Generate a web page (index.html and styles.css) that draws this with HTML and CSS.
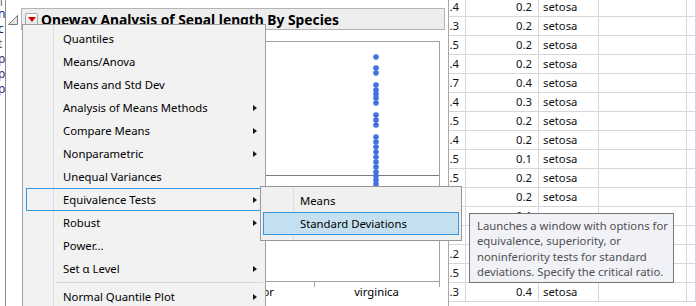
FILE: index.html
```html
<!DOCTYPE html>
<html lang="en">
<head>
  <meta charset="UTF-8" />
  <title>Oneway Analysis of Sepal length By Species</title>
  <link rel="stylesheet" href="styles.css">
</head>
<body>

  <div class="app">
    <div class="edge">
      <div class="e0">|</div>
      <div class="e1">n</div>
      <div class="e2">c</div>
      <div class="e3">t</div>
      <div class="e4">p</div>
      <div class="e4">p</div>
      <div class="e4">p</div>
    </div>

    <div class="report">
      <div class="outline">
        <svg class="disclose" width="10" height="10" viewBox="0 0 10 10">
          <polygon points="9.5,0.5 9.5,9.5 0.5,9.5" fill="#e4e4e4" stroke="#7a7a7a" stroke-width="1"/>
        </svg>
        <div class="outline-box">
          <span class="hot"><span class="hot-tri"></span></span>
          <span class="title">Oneway Analysis of Sepal length By Species</span>
        </div>
      </div>

      <svg class="plot" width="437" height="265">
        <rect x="40.5" y="0.5" width="393" height="240" fill="#fff" stroke="#a0a0a0"/>
        <line x1="40" y1="134.5" x2="433" y2="134.5" stroke="#7a7a7a"/>
        <line x1="308.5" y1="240" x2="308.5" y2="246" stroke="#a0a0a0"/>
        <line x1="433.5" y1="240" x2="433.5" y2="246" stroke="#a0a0a0"/>
        <g fill="#4372e0">
          <circle cx="370" cy="16" r="2.8"/>
          <circle cx="370" cy="27" r="2.8"/>
          <circle cx="370" cy="32" r="2.8"/>
          <circle cx="370" cy="44" r="2.8"/>
          <circle cx="370" cy="49" r="2.8"/>
          <circle cx="370" cy="53" r="2.8"/>
          <circle cx="370" cy="57" r="2.8"/>
          <circle cx="370" cy="62" r="2.8"/>
          <circle cx="370" cy="74" r="2.8"/>
          <circle cx="370" cy="79" r="2.8"/>
          <circle cx="370" cy="84" r="2.8"/>
          <circle cx="370" cy="96" r="2.8"/>
          <circle cx="370" cy="101" r="2.8"/>
          <circle cx="370" cy="106" r="2.8"/>
          <circle cx="370" cy="111" r="2.8"/>
          <circle cx="370" cy="116" r="2.8"/>
          <circle cx="370" cy="121" r="2.8"/>
          <circle cx="370" cy="126" r="2.8"/>
          <circle cx="370" cy="131" r="2.8"/>
          <circle cx="370" cy="135" r="2.8"/>
          <circle cx="370" cy="139" r="2.8"/>
          <circle cx="370" cy="143" r="2.8"/>
          <circle cx="370" cy="148" r="2.8"/>
          <circle cx="370" cy="153" r="2.8"/>
        </g>
        <text class="axis-label" x="242" y="255" text-anchor="middle">versicolor</text>
        <text class="axis-label" x="370.5" y="255" text-anchor="middle">virginica</text>
      </svg>
    </div>

    <div class="table">
      <div class="row"><div class="cell num">.4</div><div class="cell num">0.2</div><div class="cell">setosa</div><div class="cell"></div><div class="cell"></div></div>
      <div class="row"><div class="cell num">.3</div><div class="cell num">0.2</div><div class="cell">setosa</div><div class="cell"></div><div class="cell"></div></div>
      <div class="row"><div class="cell num">.5</div><div class="cell num">0.2</div><div class="cell">setosa</div><div class="cell"></div><div class="cell"></div></div>
      <div class="row"><div class="cell num">.4</div><div class="cell num">0.2</div><div class="cell">setosa</div><div class="cell"></div><div class="cell"></div></div>
      <div class="row"><div class="cell num">.7</div><div class="cell num">0.4</div><div class="cell">setosa</div><div class="cell"></div><div class="cell"></div></div>
      <div class="row"><div class="cell num">.4</div><div class="cell num">0.3</div><div class="cell">setosa</div><div class="cell"></div><div class="cell"></div></div>
      <div class="row"><div class="cell num">.5</div><div class="cell num">0.2</div><div class="cell">setosa</div><div class="cell"></div><div class="cell"></div></div>
      <div class="row"><div class="cell num">.4</div><div class="cell num">0.2</div><div class="cell">setosa</div><div class="cell"></div><div class="cell"></div></div>
      <div class="row"><div class="cell num">.5</div><div class="cell num">0.1</div><div class="cell">setosa</div><div class="cell"></div><div class="cell"></div></div>
      <div class="row"><div class="cell num">.5</div><div class="cell num">0.2</div><div class="cell">setosa</div><div class="cell"></div><div class="cell"></div></div>
      <div class="row"><div class="cell num">.5</div><div class="cell num">0.2</div><div class="cell">setosa</div><div class="cell"></div><div class="cell"></div></div>
      <div class="row"><div class="cell num">.6</div><div class="cell num">0.1</div><div class="cell"></div><div class="cell"></div><div class="cell"></div></div>
      <div class="row"><div class="cell num">.4</div><div class="cell num"></div><div class="cell"></div><div class="cell"></div><div class="cell"></div></div>
      <div class="row"><div class="cell num">.2</div><div class="cell num"></div><div class="cell"></div><div class="cell"></div><div class="cell"></div></div>
      <div class="row"><div class="cell num">.5</div><div class="cell num"></div><div class="cell"></div><div class="cell"></div><div class="cell"></div></div>
      <div class="row"><div class="cell num">.3</div><div class="cell num">0.4</div><div class="cell">setosa</div><div class="cell"></div><div class="cell"></div></div>
    </div>
  </div>

  <div class="menu">
    <div class="item">Quantiles</div>
    <div class="item">Means/Anova</div>
    <div class="item">Means and Std Dev</div>
    <div class="item sub">Analysis of Means Methods<span class="arrow"></span></div>
    <div class="item sub">Compare Means<span class="arrow"></span></div>
    <div class="item sub">Nonparametric<span class="arrow"></span></div>
    <div class="item">Unequal Variances</div>
    <div class="item sub open">Equivalence Tests<span class="arrow"></span></div>
    <div class="item sub">Robust<span class="arrow"></span></div>
    <div class="item">Power...</div>
    <div class="item sub">Set α Level<span class="arrow"></span></div>
    <div class="sep"></div>
    <div class="item sub">Normal Quantile Plot<span class="arrow"></span></div>
  </div>

  <div class="submenu">
    <div class="item">Means</div>
    <div class="item hover">Standard Deviations</div>
  </div>

  <div class="tip">
    Launches a window with options for<br>
    equivalence, superiority, or<br>
    noninferiority tests for standard<br>
    deviations. Specify the critical ratio.
  </div>

</body>
</html>
```

FILE: styles.css
```css
body {
  margin: 0;
  width: 696px;
  height: 306px;
  overflow: hidden;
  position: relative;
  font-family: 'Noto Sans', sans-serif;
  font-size: 11.3px;
  color: #000;
  background-color: #fff;
}

.app {
  display: flex;
  height: 306px;
  overflow: hidden;
}

/* cut-off column list on the far left */
.edge {
  width: 5px;
  flex-shrink: 0;
  overflow: hidden;
  border-right: 1px solid #8c8c8c;
  font-size: 12px;
  line-height: 15px;
  margin-top: -9px;
  white-space: nowrap;
}

.edge div {
  text-indent: -2px;
}

.e0 { color: #555; }
.e1 { color: #1d2a7a; }
.e2 { color: #1d2a5a; }
.e3 { color: #8a5a10; }
.e4 { color: #4a1d6e; }

.report {
  width: 442px;
  flex-shrink: 0;
  border-right: 1px solid #a8a8a8;
  background-color: #fff;
}

.outline {
  display: flex;
  align-items: center;
  margin-top: 8px;
  gap: 3px;
  padding-left: 2px;
}

.disclose {
  margin-top: 1px;
}

.outline-box {
  width: 424px;
  height: 22px;
  box-sizing: border-box;
  border: 1px solid #b4b4b4;
  background-color: #ededed;
  display: flex;
  align-items: center;
  padding-left: 3px;
}

.hot {
  width: 13px;
  height: 13px;
  box-sizing: border-box;
  border: 1px solid #a9a9a9;
  border-radius: 2px;
  background: linear-gradient(#fdfdfd, #e6e6e6);
  display: flex;
  align-items: center;
  justify-content: center;
}

.hot-tri {
  width: 0;
  height: 0;
  border-left: 4px solid transparent;
  border-right: 4px solid transparent;
  border-top: 5px solid #d40000;
}

.title {
  margin-left: 3px;
  font-weight: bold;
  font-size: 13.8px;
  white-space: nowrap;
}

.plot {
  display: block;
  margin-top: 11px;
}

.axis-label {
  font-family: 'Noto Sans', sans-serif;
  font-size: 11.3px;
  fill: #000;
}

/* data grid */
.table {
  flex: 1;
  margin-top: -2px;
  background-color: #fff;
}

.row {
  display: grid;
  grid-template-columns: 17px 73px 60px 88px 1fr;
  height: 19px;
  box-sizing: border-box;
  border-bottom: 1px solid #d6d6de;
}

.cell {
  border-right: 1px solid #d6d6de;
  line-height: 18px;
  padding-left: 4px;
  white-space: nowrap;
  overflow: hidden;
  color: #111;
}

.cell.num {
  text-align: right;
  padding-left: 0;
  padding-right: 6px;
}

/* popup menus */
.menu,
.submenu {
  position: absolute;
  box-sizing: border-box;
  background-color: #f2f2f2;
  border: 1px solid #a0a0a0;
  padding-top: 2px;
}

.menu {
  left: 22px;
  top: 24px;
  width: 244px;
  height: 290px;
}

.submenu {
  left: 260px;
  top: 186px;
  width: 202px;
  height: 55px;
  border-color: #979797;
  background-color: #f0f0f0;
}

.menu::before,
.submenu::before {
  content: "";
  position: absolute;
  top: 0;
  bottom: 0;
  left: 30px;
  width: 1px;
  background-color: #dedede;
}

.submenu::before {
  left: 32px;
}

.item {
  position: relative;
  height: 23px;
  box-sizing: border-box;
  display: flex;
  align-items: center;
  margin: 0 2px 0 3px;
  padding-left: 37px;
  white-space: nowrap;
}

.submenu .item {
  margin: 0 2px;
  padding-left: 37px;
}

.arrow {
  margin-left: auto;
  margin-right: 6px;
  width: 0;
  height: 0;
  border-top: 3.5px solid transparent;
  border-bottom: 3.5px solid transparent;
  border-left: 4px solid #1a1a1a;
}

.item.open {
  border: 1px solid #3896dc;
  padding-left: 36px;
}

.item.open .arrow {
  margin-right: 5px;
}

.item.hover {
  border: 1px solid #3896dc;
  background-color: #c5e0f0;
  padding-left: 36px;
}

.sep {
  height: 1px;
  background-color: #d7d7d7;
  margin: 2px 2px 2px 33px;
}

.tip {
  position: absolute;
  left: 469px;
  top: 213px;
  width: 205px;
  height: 70px;
  box-sizing: border-box;
  border: 1px solid #767676;
  background-color: #f1f2f7;
  color: #505050;
  padding: 4px 5px 0 7px;
  line-height: 15.3px;
  white-space: nowrap;
}
```
